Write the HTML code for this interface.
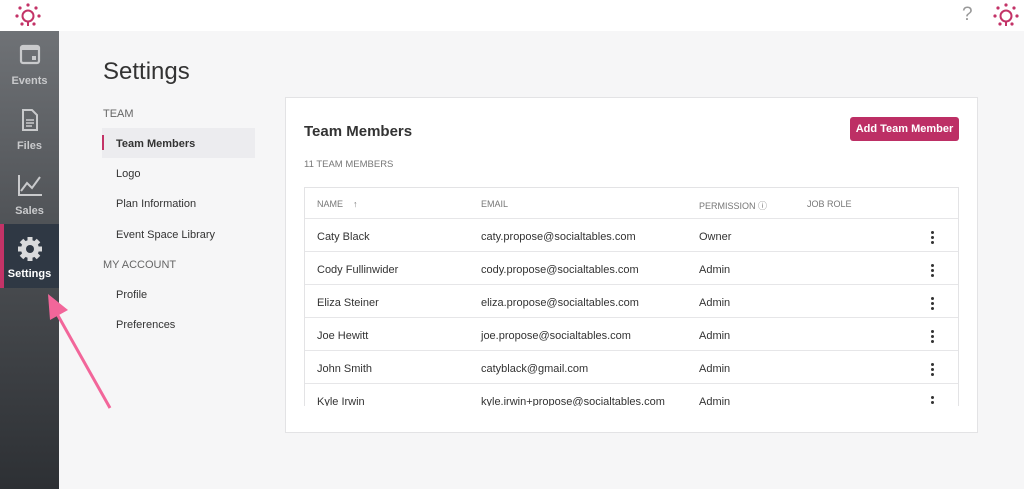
<!DOCTYPE html><html><head><style>
body{margin:0;width:1024px;height:489px;background:#f6f6f7;font-family:"Liberation Sans",sans-serif;position:relative;overflow:hidden;color:#333}
.top{position:absolute;left:0;top:0;width:1024px;height:31px;background:#fff}
.side{position:absolute;left:0;top:31px;width:59px;height:458px;background:linear-gradient(#6f7276,#4a4d51 50%,#2d3034)}
.si{position:absolute;left:0;width:59px;height:64px;text-align:center;color:#c9cacc;font-size:11px;font-weight:bold}
.si span{position:absolute;left:0;right:0;bottom:8px}
.act{background:#2f3844;color:#fff}
.act:before{content:"";position:absolute;left:0;top:0;width:4px;height:64px;background:#c33367}
.t{position:absolute;font-size:11px;color:#333}
.card{position:absolute;left:285px;top:97px;width:691px;height:334px;background:#fff;border:1px solid #e3e3e5}
.tbl{position:absolute;left:304px;top:187px;width:653px;height:218px;border:1px solid #e3e3e5;border-bottom:none;overflow:hidden}
.row{position:absolute;left:0;width:653px;height:33px;border-top:1px solid #e6e6e8;font-size:11px}
.row div{position:absolute;top:12px}
.dots{left:626px;width:3px}
.dots i{display:block;width:3px;height:3px;border-radius:2px;background:#333;margin-bottom:2px}
</style></head><body>
<div class="top"></div>
<svg style="position:absolute;left:15px;top:3px" width="26" height="26" viewBox="0 0 26 26"><g fill="#c33367"><circle cx="13" cy="2" r="1.6"/><circle cx="5" cy="5" r="1.6"/><circle cx="21" cy="5" r="1.6"/><circle cx="2" cy="13" r="1.6"/><circle cx="24" cy="13" r="1.6"/><circle cx="7" cy="21" r="1.6"/><circle cx="19" cy="21" r="1.6"/></g><circle cx="13" cy="13" r="5.5" fill="none" stroke="#c33367" stroke-width="2"/><path d="M13 19v4" stroke="#c33367" stroke-width="2"/></svg>
<div style="position:absolute;left:962px;top:4px;font-size:19px;color:#999">?</div>
<svg style="position:absolute;left:993px;top:3px" width="26" height="26" viewBox="0 0 26 26"><g fill="#c33367"><circle cx="13" cy="2" r="1.6"/><circle cx="5" cy="5" r="1.6"/><circle cx="21" cy="5" r="1.6"/><circle cx="2" cy="13" r="1.6"/><circle cx="24" cy="13" r="1.6"/><circle cx="7" cy="21" r="1.6"/><circle cx="19" cy="21" r="1.6"/></g><circle cx="13" cy="13" r="5.5" fill="none" stroke="#c33367" stroke-width="2"/><path d="M13 19v4" stroke="#c33367" stroke-width="2"/></svg>
<div class="side">
<div class="si" style="top:0"><svg style="margin-top:12px" width="22" height="22" viewBox="0 0 22 22"><rect x="2" y="3" width="18" height="17" rx="2" fill="none" stroke="#c9cacc" stroke-width="2.2"/><rect x="2" y="3" width="18" height="4" fill="#c9cacc"/><rect x="13" y="13" width="4" height="4" fill="#c9cacc"/></svg><span>Events</span></div>
<div class="si" style="top:65px"><svg style="margin-top:12px" width="22" height="24" viewBox="0 0 22 24"><path d="M4 2h9l5 5v15H4z" fill="none" stroke="#c9cacc" stroke-width="2"/><path d="M7 12h8M7 15h8M7 18h6" stroke="#c9cacc" stroke-width="1.5"/></svg><span>Files</span></div>
<div class="si" style="top:130px"><svg style="margin-top:12px" width="26" height="24" viewBox="0 0 26 24"><path d="M2 2v20h23M4 18l6-8 5 5 8-11" fill="none" stroke="#c9cacc" stroke-width="2"/></svg><span>Sales</span></div>
<div class="si act" style="top:193px"><svg style="margin-top:12px" width="26" height="26" viewBox="0 0 26 26"><g fill="#d9dadc"><circle cx="13" cy="13" r="9"/><g stroke="#d9dadc" stroke-width="5"><path d="M13 1v24M1 13h24M4.5 4.5l17 17M21.5 4.5l-17 17"/></g></g><circle cx="13" cy="13" r="4" fill="#2f3844"/></svg><span style="color:#fff">Settings</span></div>
</div>
<svg style="position:absolute;left:40px;top:290px" width="80" height="125"><path d="M70 118 L16 22" stroke="#f2669a" stroke-width="3"/><path d="M8 4 L28 20 L10 30z" fill="#f2669a"/></svg>
<div style="position:absolute;left:103px;top:58px;font-size:24px;color:#333">Settings</div>
<div class="t" style="left:103px;top:108px;color:#666">TEAM</div>
<div style="position:absolute;left:102px;top:128px;width:153px;height:30px;background:#ececef"><div style="position:absolute;left:0;top:7px;width:2px;height:15px;background:#c33367"></div></div>
<div class="t" style="left:116px;top:138px;font-weight:bold">Team Members</div>
<div class="t" style="left:116px;top:168px">Logo</div>
<div class="t" style="left:116px;top:198px">Plan Information</div>
<div class="t" style="left:116px;top:229px">Event Space Library</div>
<div class="t" style="left:103px;top:259px;color:#666">MY ACCOUNT</div>
<div class="t" style="left:116px;top:289px">Profile</div>
<div class="t" style="left:116px;top:319px">Preferences</div>
<div class="card"></div>
<div style="position:absolute;left:304px;top:123px;font-size:15px;font-weight:bold;color:#333">Team Members</div>
<div style="position:absolute;left:850px;top:117px;width:109px;height:24px;background:#bd2f65;border-radius:3px;color:#fff;font-size:11px;font-weight:bold;text-align:center;line-height:24px">Add Team Member</div>
<div style="position:absolute;left:304px;top:159px;font-size:9.5px;color:#777">11 TEAM MEMBERS</div>
<div class="tbl">
<div class="row" style="top:-1px;height:31px;font-size:9px;color:#777;border-top:none"><div style="left:12px">NAME &nbsp;&nbsp;&nbsp;↑</div><div style="left:176px">EMAIL</div><div style="left:394px">PERMISSION ⓘ</div><div style="left:502px">JOB ROLE</div></div>
<div class="row" style="top:30px"><div style="left:12px">Caty Black</div><div style="left:176px">caty.propose@socialtables.com</div><div style="left:394px">Owner</div><div class="dots"><i></i><i></i><i></i></div></div>
<div class="row" style="top:63px"><div style="left:12px">Cody Fullinwider</div><div style="left:176px">cody.propose@socialtables.com</div><div style="left:394px">Admin</div><div class="dots"><i></i><i></i><i></i></div></div>
<div class="row" style="top:96px"><div style="left:12px">Eliza Steiner</div><div style="left:176px">eliza.propose@socialtables.com</div><div style="left:394px">Admin</div><div class="dots"><i></i><i></i><i></i></div></div>
<div class="row" style="top:129px"><div style="left:12px">Joe Hewitt</div><div style="left:176px">joe.propose@socialtables.com</div><div style="left:394px">Admin</div><div class="dots"><i></i><i></i><i></i></div></div>
<div class="row" style="top:162px"><div style="left:12px">John Smith</div><div style="left:176px">catyblack@gmail.com</div><div style="left:394px">Admin</div><div class="dots"><i></i><i></i><i></i></div></div>
<div class="row" style="top:195px"><div style="left:12px">Kyle Irwin</div><div style="left:176px">kyle.irwin+propose@socialtables.com</div><div style="left:394px">Admin</div><div class="dots"><i></i><i></i><i></i></div></div>
</div>
</body></html>
